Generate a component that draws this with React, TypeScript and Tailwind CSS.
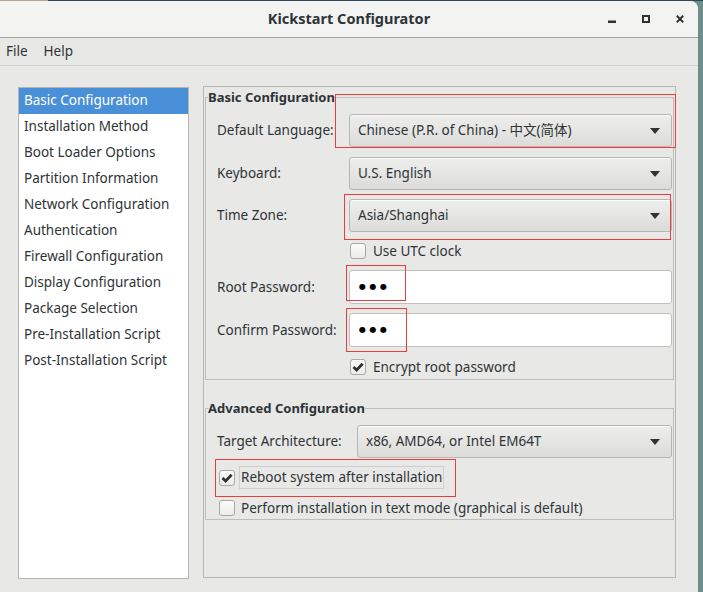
import React from 'react';

const FONT = { fontFamily: '"Noto Sans", "Noto Sans CJK SC", sans-serif' };

const sections = [
  'Basic Configuration',
  'Installation Method',
  'Boot Loader Options',
  'Partition Information',
  'Network Configuration',
  'Authentication',
  'Firewall Configuration',
  'Display Configuration',
  'Package Selection',
  'Pre-Installation Script',
  'Post-Installation Script',
];

function Combo({ value }: { value: string }) {
  return (
    <div className="flex h-[33px] flex-1 items-center justify-between rounded-[3px] border border-[#b6b6b3] bg-gradient-to-b from-[#eeeeec] to-[#dcdcda] pl-[8px] pr-[11px] shadow-[inset_0_1px_0_#fafafa]">
      <span>{value}</span>
      <svg width="10" height="6" viewBox="0 0 10 6">
        <path d="M0 0h10L5 6z" fill="#2e3436" />
      </svg>
    </div>
  );
}

function Entry() {
  return (
    <div className="flex h-[34px] flex-1 items-center rounded-[3px] border border-[#c0c0bd] bg-white pl-[9px]">
      <span className="text-[8px] tracking-[3.5px] text-black" style={{ fontFamily: '"DejaVu Sans", sans-serif' }}>
        ●●●
      </span>
    </div>
  );
}

function Check({ checked }: { checked?: boolean }) {
  return (
    <div className="flex h-[16px] w-[16px] shrink-0 items-center justify-center rounded-[3px] border border-[#a9a9a6] bg-gradient-to-b from-[#fbfbfb] to-[#ececea]">
      {checked && (
        <svg width="12" height="10" viewBox="0 0 12 10">
          <path d="M1.5 5 4.6 8 10.6 1.8" fill="none" stroke="#2e3436" strokeWidth="2.8" />
        </svg>
      )}
    </div>
  );
}

function Field({ label, width, children, className }: { label: string; width: string; children: React.ReactNode; className?: string }) {
  return (
    <div className={`flex items-center ${className ?? ''}`}>
      <div className={`${width} shrink-0`}>{label}</div>
      {children}
    </div>
  );
}

export default function App() {
  return (
    <div className="relative flex h-[592px] w-[703px] flex-col overflow-hidden bg-[#6f8d8a] text-[13.5px] text-[#2e3436]" style={FONT}>
      <div className="flex h-[1px] shrink-0">
        <div className="w-[48px] bg-[#b3a68c]" />
        <div className="flex-1 bg-[#2d4a5c]" />
      </div>
      <div className="flex flex-1">
        <div className="flex w-[698px] flex-col rounded-tr-[8px] bg-[#e8e8e7]">
          {/* title bar */}
          <div className="relative flex h-[37px] shrink-0 items-center justify-center rounded-tr-[8px] border-b border-[#a3a3a0] bg-[#f3f3f2]">
            <span className="text-[14.5px] font-bold text-[#2e3436]">Kickstart Configurator</span>
            <div className="absolute right-[14px] top-0 flex h-full items-center gap-[26px] pb-[1px]">
              <svg width="8" height="8" viewBox="0 0 8 8">
                <rect x="0" y="5.5" width="8" height="2.5" fill="#2e3436" />
              </svg>
              <svg width="8" height="8" viewBox="0 0 8 8">
                <rect x="1" y="1" width="6" height="6" fill="none" stroke="#2e3436" strokeWidth="2" />
              </svg>
              <svg width="8" height="8" viewBox="0 0 8 8">
                <path d="M0.8 0.8 7.2 7.2M7.2 0.8 0.8 7.2" stroke="#2e3436" strokeWidth="2" />
              </svg>
            </div>
          </div>

          {/* menu bar */}
          <div className="flex h-[28px] shrink-0 items-center gap-[16px] border-b border-[#d3d3d0] px-[6px]">
            <span>File</span>
            <span>Help</span>
          </div>

          {/* body */}
          <div className="flex flex-1 pl-[18px] pt-[20px]">
            <div className="mt-[1px] h-[492px] w-[171px] border border-[#b6b6b3] bg-white">
              {sections.map((s, i) => (
                <div
                  key={s}
                  className={`flex h-[26px] items-center pb-[1px] pl-[5px] ${i === 0 ? 'bg-[#4a90d9] text-white' : 'text-[#2e3436]'}`}
                >
                  {s}
                </div>
              ))}
            </div>

            <div className="ml-[14px] h-[492px] w-[473px] border border-[#b6b6b3] px-[1px]">
              <fieldset className="mt-[1px] border border-[#bdbdba] pb-[2px]">
                <legend className="ml-[2px] text-[13px] font-bold leading-[18px]">Basic Configuration</legend>
                <div className="flex flex-col pl-[11px] pr-[1px]">
                  <Field label="Default Language:" width="w-[132px]" className="mt-[8px]">
                    <Combo value="Chinese (P.R. of China) - 中文(简体)" />
                  </Field>
                  <Field label="Keyboard:" width="w-[132px]" className="mt-[10px]">
                    <Combo value="U.S. English" />
                  </Field>
                  <Field label="Time Zone:" width="w-[132px]" className="mt-[9px]">
                    <Combo value="Asia/Shanghai" />
                  </Field>
                  <div className="mt-[9px] flex h-[20px] items-center gap-[7px] pl-[133px]">
                    <Check />
                    <span>Use UTC clock</span>
                  </div>
                  <Field label="Root Password:" width="w-[132px]" className="mt-[9px]">
                    <Entry />
                  </Field>
                  <Field label="Confirm Password:" width="w-[132px]" className="mt-[9px]">
                    <Entry />
                  </Field>
                  <div className="mt-[10px] flex h-[20px] items-center gap-[7px] pl-[133px]">
                    <Check checked />
                    <span>Encrypt root password</span>
                  </div>
                </div>
              </fieldset>

              <fieldset className="mt-[19px] border border-[#bdbdba] pb-[1px]">
                <legend className="ml-[2px] text-[13px] font-bold leading-[18px]">Advanced Configuration</legend>
                <div className="flex flex-col pl-[11px] pr-[1px]">
                  <Field label="Target Architecture:" width="w-[140px]" className="mt-[8px]">
                    <Combo value="x86, AMD64, or Intel EM64T" />
                  </Field>
                  <div className="mt-[8px] flex h-[23px] items-center gap-[4px] pl-[2px]">
                    <Check checked />
                    <span className="flex h-[23px] items-center border border-[#cfcfcc] px-[1px]">
                      Reboot system after installation
                    </span>
                  </div>
                  <div className="mt-[9px] flex h-[20px] items-center gap-[6px] pl-[2px]">
                    <Check />
                    <span>Perform installation in text mode (graphical is default)</span>
                  </div>
                </div>
              </fieldset>
            </div>
          </div>
        </div>
      </div>

      {/* red annotation boxes */}
      <div className="pointer-events-none absolute left-[335px] top-[94px] h-[54px] w-[341px] border border-[#ee3b3b]" />
      <div className="pointer-events-none absolute left-[344px] top-[194px] h-[46px] w-[327px] border border-[#ee3b3b]" />
      <div className="pointer-events-none absolute left-[346px] top-[265px] h-[36px] w-[60px] border border-[#ee3b3b]" />
      <div className="pointer-events-none absolute left-[346px] top-[308px] h-[44px] w-[61px] border border-[#ee3b3b]" />
      <div className="pointer-events-none absolute left-[215px] top-[459px] h-[38px] w-[241px] border border-[#ee3b3b]" />
    </div>
  );
}
